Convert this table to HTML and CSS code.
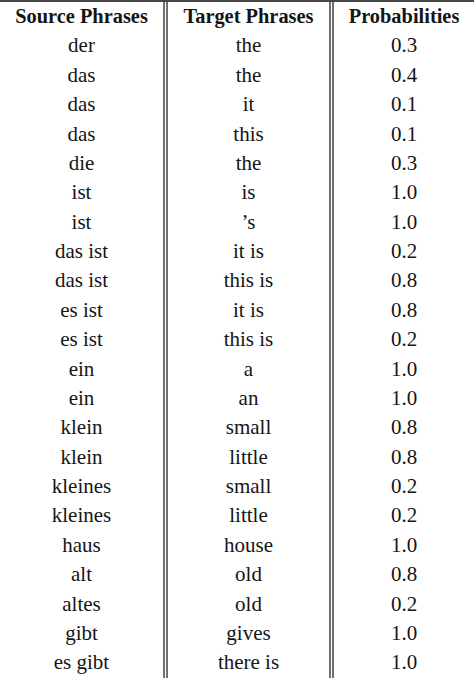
FILE: index.html
```html
<!DOCTYPE html>
<html>
<head>
<meta charset="utf-8">
<link rel="stylesheet" href="styles.css">
</head>
<body>
<div class="table">
  <div class="col col-src">
    <div class="cell head">Source Phrases</div>
    <div class="cell">der</div>
    <div class="cell">das</div>
    <div class="cell">das</div>
    <div class="cell">das</div>
    <div class="cell">die</div>
    <div class="cell">ist</div>
    <div class="cell">ist</div>
    <div class="cell">das ist</div>
    <div class="cell">das ist</div>
    <div class="cell">es ist</div>
    <div class="cell">es ist</div>
    <div class="cell">ein</div>
    <div class="cell">ein</div>
    <div class="cell">klein</div>
    <div class="cell">klein</div>
    <div class="cell">kleines</div>
    <div class="cell">kleines</div>
    <div class="cell">haus</div>
    <div class="cell">alt</div>
    <div class="cell">altes</div>
    <div class="cell">gibt</div>
    <div class="cell">es gibt</div>
  </div>
  <div class="divider"></div>
  <div class="col col-tgt">
    <div class="cell head">Target Phrases</div>
    <div class="cell">the</div>
    <div class="cell">the</div>
    <div class="cell">it</div>
    <div class="cell">this</div>
    <div class="cell">the</div>
    <div class="cell">is</div>
    <div class="cell">’s</div>
    <div class="cell">it is</div>
    <div class="cell">this is</div>
    <div class="cell">it is</div>
    <div class="cell">this is</div>
    <div class="cell">a</div>
    <div class="cell">an</div>
    <div class="cell">small</div>
    <div class="cell">little</div>
    <div class="cell">small</div>
    <div class="cell">little</div>
    <div class="cell">house</div>
    <div class="cell">old</div>
    <div class="cell">old</div>
    <div class="cell">gives</div>
    <div class="cell">there is</div>
  </div>
  <div class="divider"></div>
  <div class="col col-prob">
    <div class="cell head">Probabilities</div>
    <div class="cell">0.3</div>
    <div class="cell">0.4</div>
    <div class="cell">0.1</div>
    <div class="cell">0.1</div>
    <div class="cell">0.3</div>
    <div class="cell">1.0</div>
    <div class="cell">1.0</div>
    <div class="cell">0.2</div>
    <div class="cell">0.8</div>
    <div class="cell">0.8</div>
    <div class="cell">0.2</div>
    <div class="cell">1.0</div>
    <div class="cell">1.0</div>
    <div class="cell">0.8</div>
    <div class="cell">0.8</div>
    <div class="cell">0.2</div>
    <div class="cell">0.2</div>
    <div class="cell">1.0</div>
    <div class="cell">0.8</div>
    <div class="cell">0.2</div>
    <div class="cell">1.0</div>
    <div class="cell">1.0</div>
  </div>
</div>
</body>
</html>
```
FILE: styles.css
```css
html, body {
  margin: 0;
  padding: 0;
  background: #ffffff;
}
body {
  font-family: "Liberation Serif", "Times New Roman", serif;
  color: #151515;
  width: 474px;
  height: 679px;
  overflow: hidden;
}
.table {
  display: flex;
  border-top: 2px solid #454545;
}
.col {
  display: flex;
  flex-direction: column;
}
.col-src { width: 163px; }
.col-tgt { width: 161px; }
.col-prob { width: 140px; }
.divider {
  width: 1px;
  border-left: 2px solid #707070;
  border-right: 2px solid #707070;
}
.cell {
  height: 29.38px;
  line-height: 29.38px;
  text-align: center;
  font-size: 21px;
  white-space: nowrap;
}
.cell.head {
  font-weight: bold;
  font-size: 20.4px;
}
```
